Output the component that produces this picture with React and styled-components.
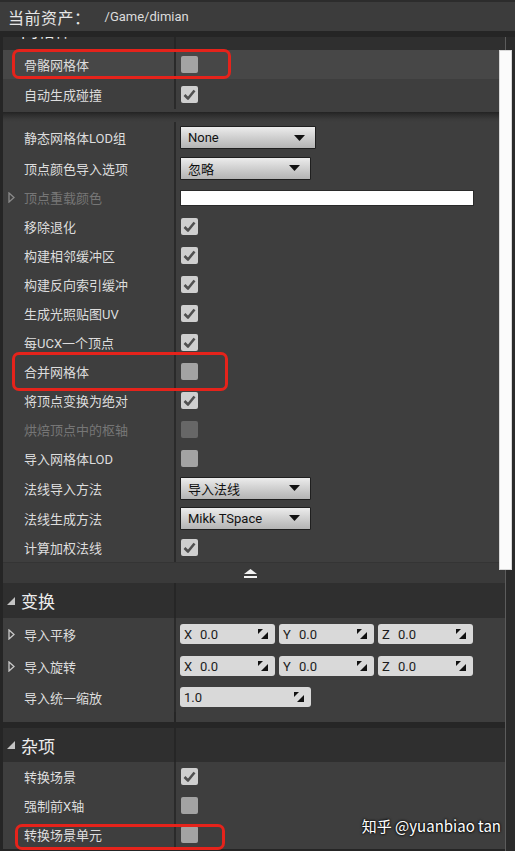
import React from 'react';
import styled, { createGlobalStyle } from 'styled-components';

const Global = createGlobalStyle`
  html, body { margin: 0; padding: 0; background: #252525; }
  body { font-family: Roboto, "Noto Sans CJK SC", sans-serif; }
`;

const Page = styled.div`
  position: relative;
  width: 515px;
  height: 851px;
  overflow: hidden;
  background: #252525;
  display: flex;
  flex-direction: column;
`;

const TopBar = styled.div`
  position: relative;
  z-index: 2;
  flex: none;
  box-sizing: border-box;
  height: 31px;
  border-top: 2px solid #2c2c2c;
  background: #3c3c3c;
  display: flex;
  align-items: center;
  padding-left: 8px;
  gap: 14px;
  color: #e6e6e6;
`;

const AssetLabel = styled.span`
  font-size: 16px;
  letter-spacing: 0.5px;
`;

const AssetPath = styled.span`
  font-size: 13px;
  color: #dcdcdc;
`;

const Body = styled.div`
  position: relative;
  flex: 1;
  margin-top: 6px;
  display: flex;
  min-height: 0;
`;

const Panel = styled.div`
  width: 502px;
  margin-left: 3px;
  overflow: hidden;
`;

const Scrolled = styled.div`
  margin-top: -21px;
  display: flex;
  flex-direction: column;
`;

const ScrollTrack = styled.div`
  width: 9px;
  border-left: 1px solid #5c5c5c;
  background: #2b2b2b;
`;

const ScrollThumb = styled.div`
  position: absolute;
  z-index: 6;
  left: 499px;
  top: 13px;
  width: 13px;
  height: 520px;
  box-sizing: border-box;
  background: #fbfbfb;
  border: 1px solid #d8d8d8;
`;

const SectionHead = styled.div`
  display: grid;
  grid-template-columns: 171px 1fr;
  height: ${p => p.$h}px;
  background: #2f2f2f;
`;

const HeadTitle = styled.div`
  display: flex;
  align-items: center;
  gap: 6px;
  padding-left: 4px;
  padding-bottom: ${p => p.$lift || 0}px;
  font-size: 17px;
  color: #ececec;
  white-space: nowrap;
`;

const HeadFill = styled.div`
  border-left: 2px solid #262626;
`;

const Row = styled.div`
  position: relative;
  display: grid;
  grid-template-columns: 171px 1fr;
  height: ${p => p.$h || 29}px;
  background: ${p => (p.$hl ? '#474747' : '#3e3e3e')};
`;

const LabelCell = styled.div`
  display: flex;
  align-items: center;
  padding-left: 5px;
  font-size: 13px;
  color: ${p => (p.$disabled ? '#767676' : '#dddddd')};
  white-space: nowrap;
`;

const ArrowSlot = styled.span`
  width: 16px;
  display: flex;
  align-items: center;
`;

const ValueCell = styled.div`
  display: flex;
  align-items: center;
  gap: 4px;
  padding-left: 4px;
  border-left: 2px solid #2a2a2a;
`;

const Separator = styled.div`
  height: 13px;
  background: linear-gradient(#3e3e3e 0 3px, #232323 3px, #2e2e2e 6px, #3a3a3a 10px, #3e3e3e);
`;

const Box = styled.div`
  width: 17px;
  height: 17px;
  margin-left: 1px;
  border-radius: 2px;
  box-sizing: border-box;
  background: ${p => (p.$disabled ? '#676767' : p.$checked ? '#cfcfcf' : '#a3a3a3')};
  display: flex;
  align-items: center;
  justify-content: center;
`;

const Combo = styled.div`
  box-sizing: border-box;
  width: ${p => p.$w}px;
  height: 23px;
  border: 1px solid #1f1f1f;
  border-radius: 1px;
  background: linear-gradient(#ececec, #d2d2d2 45%, #b4b4b4);
  display: flex;
  align-items: center;
  justify-content: space-between;
  padding: 0 10px 0 7px;
  font-size: 13px;
  color: #111;
`;

const ColorBar = styled.div`
  box-sizing: border-box;
  width: 294px;
  height: 16px;
  background: #ffffff;
  border: 1px solid #2a2a2a;
`;

const NumField = styled.div`
  box-sizing: border-box;
  width: ${p => p.$w}px;
  height: 20px;
  border-radius: 3px;
  background: #d9d9d9;
  display: flex;
  align-items: center;
  justify-content: space-between;
  padding: 0 7px 0 4px;
  font-size: 13px;
  color: #1c1c1c;
`;

const Axis = styled.span`
  display: inline-block;
  width: 16px;
`;

const CollapseBar = styled.div`
  height: 21px;
  box-sizing: border-box;
  border-top: 1px solid #343434;
  background: #3a3a3a;
  display: flex;
  align-items: center;
  justify-content: center;
  padding-right: 8px;
`;

const SectionFoot = styled.div`
  height: ${p => p.$h}px;
  background: #3e3e3e;
  display: grid;
  grid-template-columns: 171px 1fr;
`;

const Gap = styled.div`
  height: ${p => p.$h}px;
  background: #262626;
`;

const Highlight = styled.div`
  position: absolute;
  z-index: 5;
  left: ${p => p.$x}px;
  top: ${p => p.$y}px;
  width: ${p => p.$w}px;
  height: ${p => p.$h}px;
  box-sizing: border-box;
  border: 3px solid #e5231b;
  border-radius: 7px;
  pointer-events: none;
`;

const Watermark = styled.div`
  position: absolute;
  z-index: 7;
  right: 14px;
  bottom: 15px;
  font-size: 15px;
  color: #ffffff;
  text-shadow: 0 0 2px #000, 0 0 3px #000;
  font-family: "Noto Sans CJK SC", sans-serif;
`;

const Check = () => (
  <svg width="13" height="11" viewBox="0 0 13 11">
    <path d="M1.5 6 L5 9.5 L11.5 1.5" fill="none" stroke="#505050" strokeWidth="2.6" strokeLinejoin="round" />
  </svg>
);

const DownTri = () => (
  <svg width="11" height="6" viewBox="0 0 11 6">
    <polygon points="0,0 11,0 5.5,6" fill="#111" />
  </svg>
);

const RightArrow = ({ dim }) => (
  <svg width="7" height="11" viewBox="0 0 7 11">
    <polygon points="1,1 6,5.5 1,10" fill="none" stroke={dim ? '#8a8a8a' : '#c8c8c8'} strokeWidth="1.3" />
  </svg>
);

const SectionTri = () => (
  <svg width="8" height="8" viewBox="0 0 8 8">
    <polygon points="8,0 8,8 0,8" fill="#c4c4c4" />
  </svg>
);

const DragIcon = () => (
  <svg width="10" height="10" viewBox="0 0 10 10">
    <polygon points="0,0 5,0 0,5" fill="#111" />
    <polygon points="10,10 3,10 10,3" fill="#111" />
  </svg>
);

const CollapseIcon = () => (
  <svg width="13" height="9" viewBox="0 0 13 9">
    <polygon points="6.5,0 13,5 0,5" fill="#f2f2f2" />
    <rect x="0" y="7" width="13" height="2" fill="#f2f2f2" />
  </svg>
);

const CheckBox = ({ checked, disabled }) => (
  <Box $checked={checked} $disabled={disabled}>{checked ? <Check /> : null}</Box>
);

const Dropdown = ({ w, text }) => (
  <Combo $w={w}>
    <span>{text}</span>
    <DownTri />
  </Combo>
);

const Field = ({ w, axis, value }) => (
  <NumField $w={w}>
    <span>
      {axis ? <Axis>{axis}</Axis> : null}
      {value}
    </span>
    <DragIcon />
  </NumField>
);

const PropRow = ({ label, h, hl, disabled, arrow, children, box }) => (
  <Row $h={h} $hl={hl}>
    <LabelCell $disabled={disabled}>
      <ArrowSlot>{arrow ? <RightArrow dim={disabled} /> : null}</ArrowSlot>
      {label}
    </LabelCell>
    <ValueCell>{children}</ValueCell>
    {box ? <Highlight $x={box.x} $y={box.y} $w={box.w} $h={box.h} /> : null}
  </Row>
);

const Header = ({ title, h, lift }) => (
  <SectionHead $h={h}>
    <HeadTitle $lift={lift}>
      <SectionTri />
      {title}
    </HeadTitle>
    <HeadFill />
  </SectionHead>
);

const meshChecks = [
  { label: '移除退化', checked: true },
  { label: '构建相邻缓冲区', checked: true },
  { label: '构建反向索引缓冲', checked: true },
  { label: '生成光照贴图UV', checked: true },
  { label: '每UCX一个顶点', checked: true },
  { label: '合并网格体', checked: false, box: { x: 9, y: -5, w: 216, h: 39 } },
  { label: '将顶点变换为绝对', checked: true },
  { label: '烘焙顶点中的枢轴', checked: false, disabled: true },
  { label: '导入网格体LOD', checked: false },
];

export default function App() {
  return (
    <Page>
      <Global />
      <TopBar>
        <AssetLabel>当前资产：</AssetLabel>
        <AssetPath>/Game/dimian</AssetPath>
      </TopBar>
      <Body>
        <Panel>
          <Scrolled>
            <Header title="网格体" h={34} lift={7} />
            <PropRow label="骨骼网格体" hl box={{ x: 9, y: -1, w: 219, h: 30 }}>
              <CheckBox checked={false} />
            </PropRow>
            <PropRow label="自动生成碰撞" h={30}>
              <CheckBox checked />
            </PropRow>
            <Separator />
            <PropRow label="静态网格体LOD组" h={31}>
              <Dropdown w={136} text="None" />
            </PropRow>
            <PropRow label="顶点颜色导入选项" h={30}>
              <Dropdown w={131} text="忽略" />
            </PropRow>
            <PropRow label="顶点重载颜色" disabled arrow>
              <ColorBar />
            </PropRow>
            {meshChecks.map(r => (
              <PropRow key={r.label} label={r.label} disabled={r.disabled} box={r.box}>
                <CheckBox checked={r.checked} disabled={r.disabled} />
              </PropRow>
            ))}
            <PropRow label="法线导入方法" h={30}>
              <Dropdown w={131} text="导入法线" />
            </PropRow>
            <PropRow label="法线生成方法" h={30}>
              <Dropdown w={131} text="Mikk TSpace" />
            </PropRow>
            <PropRow label="计算加权法线">
              <CheckBox checked />
            </PropRow>
            <CollapseBar>
              <CollapseIcon />
            </CollapseBar>

            <Header title="变换" h={35} />
            <PropRow label="导入平移" h={32} arrow>
              <Field w={95} axis="X" value="0.0" />
              <Field w={95} axis="Y" value="0.0" />
              <Field w={95} axis="Z" value="0.0" />
            </PropRow>
            <PropRow label="导入旋转" h={32} arrow>
              <Field w={95} axis="X" value="0.0" />
              <Field w={95} axis="Y" value="0.0" />
              <Field w={95} axis="Z" value="0.0" />
            </PropRow>
            <PropRow label="导入统一缩放" h={30}>
              <Field w={131} value="1.0" />
            </PropRow>
            <SectionFoot $h={10}>
              <div />
              <HeadFill />
            </SectionFoot>
            <Gap $h={6} />

            <Header title="杂项" h={34} />
            <PropRow label="转换场景">
              <CheckBox checked />
            </PropRow>
            <PropRow label="强制前X轴">
              <CheckBox checked={false} />
            </PropRow>
            <PropRow label="转换场景单元" box={{ x: 12, y: 4, w: 210, h: 26 }}>
              <CheckBox checked={false} />
            </PropRow>
          </Scrolled>
        </Panel>
        <ScrollTrack />
        <ScrollThumb />
      </Body>
      <Watermark>知乎 @yuanbiao tan</Watermark>
    </Page>
  );
}
